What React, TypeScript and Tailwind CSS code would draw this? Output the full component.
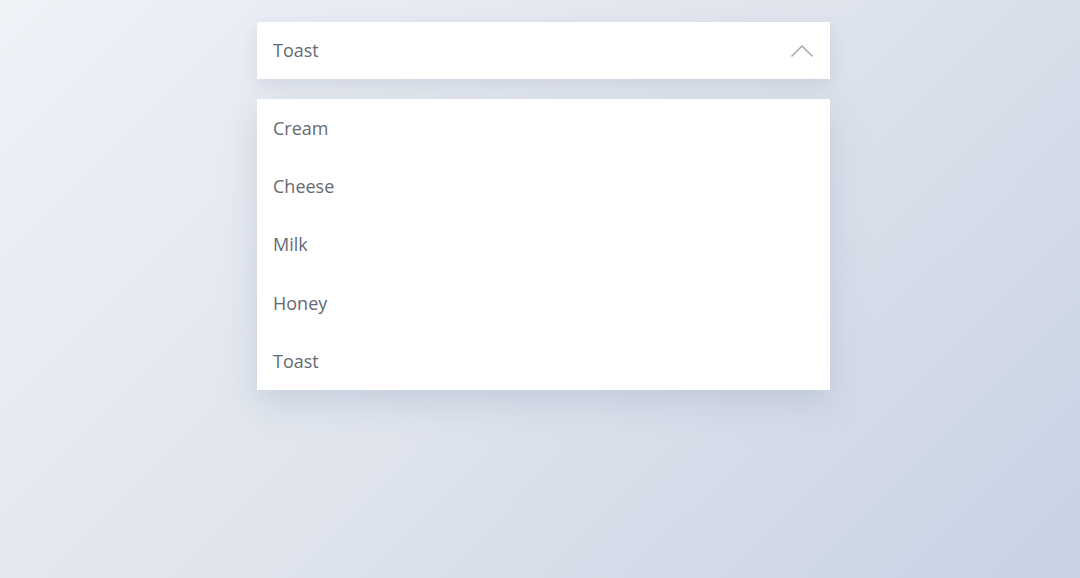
import React from "react";

const items = ["Cream", "Cheese", "Milk", "Honey", "Toast"];

export default function App() {
  return (
    <div
      className="w-[1080px] h-[578px] overflow-hidden bg-[linear-gradient(135deg,#eff2f7_0%,#dfe4ed_50%,#c8d2e4_100%)] pl-[257px] pt-[22px]"
      style={{ fontFamily: '"Open Sans", "Noto Sans", sans-serif' }}
    >
      <div className="w-[573px] flex flex-col gap-[20px]">
        <div className="h-[57px] bg-white flex items-center justify-between pl-[16px] pr-[16px] shadow-[0_6px_16px_rgba(150,160,185,0.28)]">
          <span className="text-[18px] text-[#646a74]">Toast</span>
          <svg width="24" height="14" viewBox="0 0 24 14" fill="none">
            <path d="M1.5 12.5 L12 2 L22.5 12.5" stroke="#a3a8b2" strokeWidth="1.5" />
          </svg>
        </div>
        <div className="bg-white flex flex-col shadow-[0_12px_32px_rgba(150,160,185,0.35)]">
          {items.map((it) => (
            <div key={it} className="h-[58.3px] flex items-center pl-[16px] text-[18px] text-[#646a74]">
              {it}
            </div>
          ))}
        </div>
      </div>
    </div>
  );
}
